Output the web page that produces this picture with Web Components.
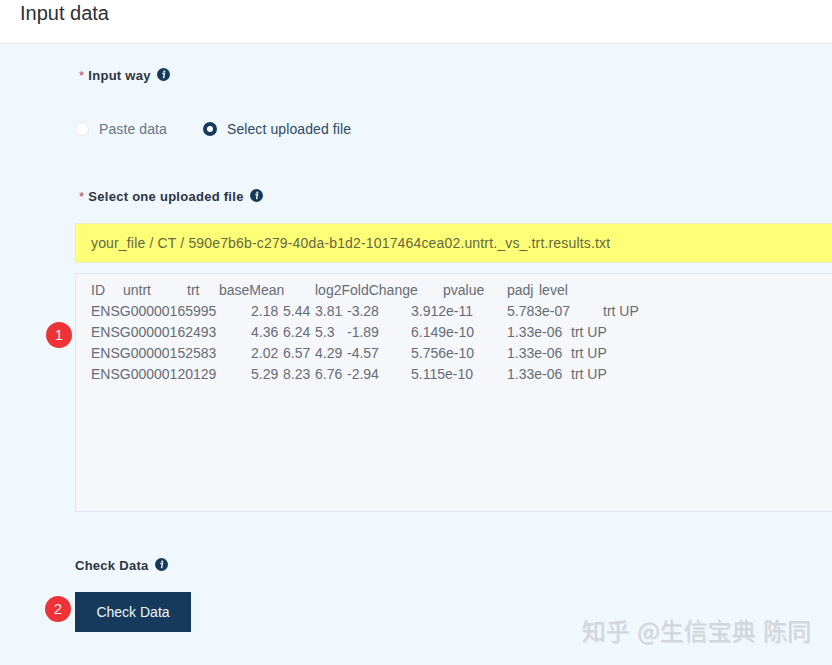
<!DOCTYPE html>
<html>
<head>
<meta charset="utf-8">
<title>Input data</title>
<style>
  html, body { margin: 0; padding: 0; height: 100%; overflow: hidden; background: #f0f8fe; }
  body { font-family: "Liberation Sans", Arial, sans-serif; }
</style>
</head>
<body>

<input-page heading="Input data">
  <form-label required hint style="--label-indent: 4px; --label-height: 20px; margin-top: 21px">Input way</form-label>
  <radio-group style="margin-top: 34px">
    <radio-item>Paste data</radio-item>
    <radio-item checked>Select uploaded file</radio-item>
  </radio-group>
  <form-label required hint style="--label-indent: 4px; --label-height: 20px; margin-top: 47px">Select one uploaded file</form-label>
  <file-path style="margin-top: 17px">your_file / CT / 590e7b6b-c279-40da-b1d2-1017464cea02.untrt._vs_.trt.results.txt</file-path>
  <data-preview style="margin-top: 10px" step="1"></data-preview>
  <form-label hint style="--label-height: 20px; margin-top: 43px">Check Data</form-label>
  <check-button style="margin-top: 17px" step="2">Check Data</check-button>
  <span slot="mark">知乎 @生信宝典 陈同</span>
</input-page>

<script>
(function() {
    'use strict';

    var INFO_ICON = '<svg width="13" height="13" viewBox="0 0 13 13" aria-hidden="true">' +
        '<circle cx="6.5" cy="6.5" r="6.5" fill="#163a5c"/>' +
        '<circle cx="7.3" cy="3.4" r="1" fill="#fff"/>' +
        '<path d="M5.4 5.5h2.1L6.6 9.3c-.1.4.2.5.9.2" fill="none" stroke="#fff" stroke-width="1.3"/>' +
        '</svg>';

    function define(name, html, extra) {
        var tpl = document.createElement('template');
        tpl.innerHTML = html;
        class Base extends HTMLElement {
            constructor() {
                super();
                this.attachShadow({ mode: 'open' });
                this.shadowRoot.appendChild(tpl.content.cloneNode(true));
            }
            connectedCallback() {
                if (extra) extra.call(this, this.shadowRoot);
            }
        }
        customElements.define(name, Base);
    }

    define('input-page', [
        '<style>',
        '  :host { display: block; width: 832px; height: 665px; overflow: hidden; position: relative; }',
        '  header { height: 43px; background: #fff; box-sizing: border-box; padding-left: 20px; }',
        '  h1 { margin: 0; font: 400 20px/26px "Liberation Sans", Arial, sans-serif; color: #2b2f36; }',
        '  main { height: 622px; box-sizing: border-box; border-top: 1px solid #e3ecf4; background: #f0f8fe;',
        '         padding-left: 75px; width: 1000px; }',
        '  .mark { position: absolute; right: 21px; bottom: 20px; font: 24px/30px "Noto Sans CJK SC", sans-serif;',
        '          word-spacing: 2px; color: #d2d6da; text-shadow: 1px 1px 0 #9aa0a644; white-space: nowrap; }',
        '</style>',
        '<header><h1></h1></header>',
        '<main><slot></slot></main>',
        '<div class="mark"><slot name="mark"></slot></div>'
    ].join('\n'), function(root) {
        root.querySelector('h1').textContent = this.getAttribute('heading');
    });

    define('form-label', [
        '<style>',
        '  :host { display: flex; align-items: center; height: var(--label-height, 20px); font-size: 13px;',
        '          font-weight: 700; color: #2e3440; letter-spacing: .27px; white-space: nowrap;',
        '          padding-left: var(--label-indent, 0); }',
        '  .req { color: #c0395a; font-weight: 400; font-size: 13px; margin-right: 4px; display: none; }',
        '  .info { margin-left: 6px; display: none; height: 13px; margin-top: -2px; }',
        '  :host([required]) .req { display: inline; }',
        '  :host([hint]) .info { display: block; }',
        '</style>',
        '<span class="req">*</span><slot></slot><span class="info">' + INFO_ICON + '</span>'
    ].join('\n'));

    define('radio-group', [
        '<style>',
        '  :host { display: flex; gap: 36px; height: 20px; align-items: center; }',
        '</style>',
        '<slot></slot>'
    ].join('\n'));

    define('radio-item', [
        '<style>',
        '  :host { display: inline-flex; align-items: center; gap: 10px; font-size: 14px; letter-spacing: .1px;',
        '          color: #6b7684; white-space: nowrap; }',
        '  :host([checked]) { color: #2f4a63; }',
        '  i { width: 14px; height: 14px; border-radius: 50%; box-sizing: border-box; background: #fff;',
        '      border: 1px solid #e6e9ee; display: block; }',
        '  :host([checked]) i { border: 4.5px solid #163a5c; }',
        '</style>',
        '<i></i><slot></slot>'
    ].join('\n'));

    define('file-path', [
        '<style>',
        '  :host { display: flex; align-items: center; height: 40px; box-sizing: border-box; padding-left: 15px;',
        '          background: #ffff77; border: 1px solid #e8ecc8; font-size: 14px; letter-spacing: .16px;',
        '          color: #666842; white-space: nowrap; }',
        '</style>',
        '<slot></slot>'
    ].join('\n'));

    var ROWS = [
        'ID\tuntrt\t\ttrt\tbaseMean\tlog2FoldChange\tpvalue\tpadj\tlevel',
        'ENSG00000165995\t\t2.18\t5.44\t3.81\t-3.28\t3.912e-11\t\t5.783e-07\ttrt UP',
        'ENSG00000162493\t\t4.36\t6.24\t5.3\t-1.89\t6.149e-10\t1.33e-06\ttrt UP',
        'ENSG00000152583\t\t2.02\t6.57\t4.29\t-4.57\t5.756e-10\t1.33e-06\ttrt UP',
        'ENSG00000120129\t\t5.29\t8.23\t6.76\t-2.94\t5.115e-10\t\t1.33e-06\ttrt UP'
    ].join('\n');

    define('step-badge', [
        '<style>',
        '  :host { position: absolute; left: -30px; top: var(--badge-top, 0); width: 26px; height: 26px; border-radius: 50%;',
        '          background: #ee3338; color: #ffe9e4; font-size: 15px; line-height: 25px; text-align: center; }',
        '</style>',
        '<slot></slot>'
    ].join('\n'));

    define('data-preview', [
        '<style>',
        '  :host { display: block; position: relative; height: 239px; box-sizing: border-box; background: #f5f7fb;',
        '          border: 1px solid #e1e4f0; }',
        '  pre { margin: 0; padding: 6px 15px; font: 14px/21px "Liberation Sans", Arial, sans-serif; color: #666c75; tab-size: 32px; }',
        '</style>',
        '<pre></pre>',
        '<step-badge style="--badge-top: 48px"></step-badge>'
    ].join('\n'), function(root) {
        root.querySelector('pre').textContent = ROWS;
        root.querySelector('step-badge').textContent = this.getAttribute('step');
    });

    define('check-button', [
        '<style>',
        '  :host { display: block; position: relative; width: 116px; height: 40px; }',
        '  button { width: 116px; height: 40px; border: 0; padding: 0; background: #163a5c; color: #eef5fb;',
        '           font: 14px "Liberation Sans", Arial, sans-serif; }',
        '</style>',
        '<button type="button"><slot></slot></button>',
        '<step-badge style="--badge-top: 4px"></step-badge>'
    ].join('\n'), function(root) {
        root.querySelector('step-badge').textContent = this.getAttribute('step');
    });
})();
</script>
</body>
</html>
